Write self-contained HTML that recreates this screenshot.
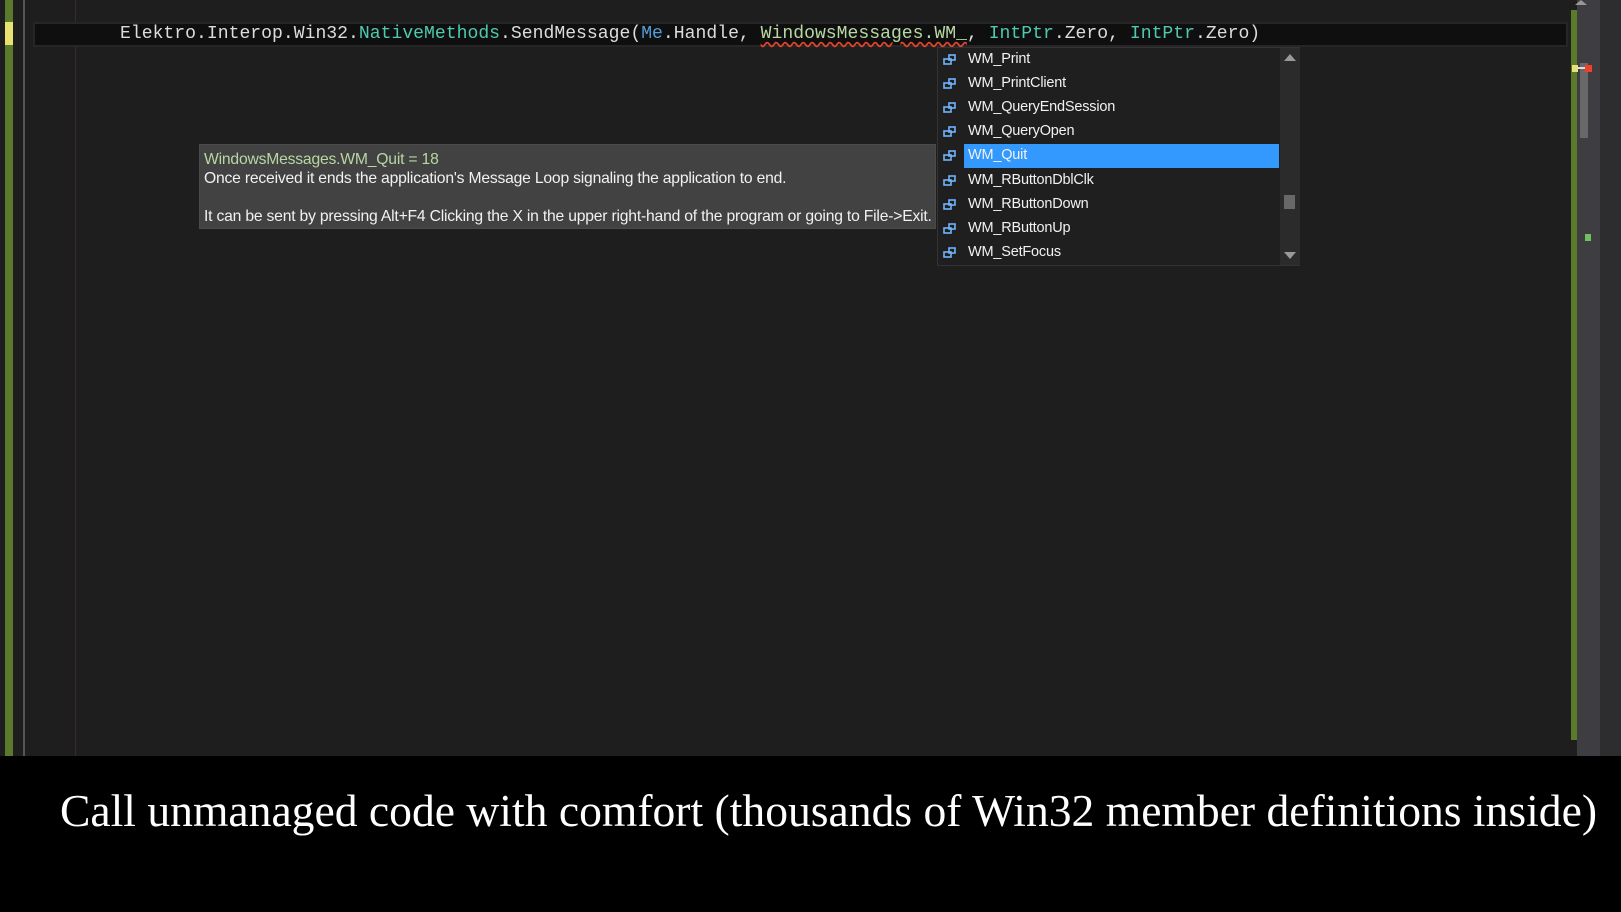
<!DOCTYPE html>
<html><head><meta charset="utf-8"><style>
*{margin:0;padding:0;box-sizing:border-box}
body{width:1621px;height:912px;background:#000;position:relative;overflow:hidden;font-family:"Liberation Sans",sans-serif}
.ed{position:absolute;left:0;top:0;width:1621px;height:756px;background:#1e1e1e}
.abs{position:absolute}
.code{position:absolute;left:120px;top:22px;font-family:"Liberation Mono",monospace;font-size:18.1px;color:#dcdcdc;white-space:pre;line-height:24px}
.t{color:#4ec9b0}.k{color:#569cd6}.g{color:#b8d7a3}
.tip{position:absolute;left:199px;top:144px;width:737px;height:85px;background:#424242;border:1px solid #4a4a4a;color:#f1f1f1;font-size:15.7px;padding:5px 0 0 4px;line-height:19px;letter-spacing:-0.2px;white-space:nowrap}
.list{position:absolute;left:937px;top:47px;width:363px;height:219px;background:#1f1f1f;border:1px solid #333337}
.it{position:absolute;left:28px;height:23px;line-height:23px;color:#f1f1f1;font-size:14.5px;width:316px;padding-left:3px;letter-spacing:-0.2px}
.ic{position:absolute;left:6px;width:14px;height:12px}
</style></head><body>
<div class="ed">
 <div class="abs" style="left:5px;top:0;width:8px;height:756px;background:#5b7a2c"></div>
 <div class="abs" style="left:5px;top:22px;width:8px;height:23px;background:#e8e370"></div>
 <div class="abs" style="left:23px;top:0;width:2px;height:756px;background:#555"></div>
 <div class="abs" style="left:75px;top:0;width:1px;height:756px;background:#3a2a2a"></div>
 <div class="abs" style="left:33px;top:22px;width:1535px;height:25px;background:#0f0f0f;border:2px solid #262626"></div>
 <div class="code">Elektro.Interop.Win32.<span class="t">NativeMethods</span>.SendMessage(<span class="k">Me</span>.Handle, <span class="g" style="text-decoration:underline wavy #e0452b;text-underline-offset:3px">WindowsMessages.WM_</span>, <span class="t">IntPtr</span>.Zero, <span class="t">IntPtr</span>.Zero)</div>
 <div class="tip"><span style="color:#b8d7a3">WindowsMessages.WM_Quit = 18</span><br>Once received it ends the application's Message Loop signaling the application to end.<br><br>It can be sent by pressing Alt+F4 Clicking the X in the upper right-hand of the program or going to File-&gt;Exit.</div>
 <div class="list">
  <div class="abs" style="left:26px;top:96px;width:315px;height:24px;background:#3399ff"></div>
  <div class="abs" style="left:342px;top:0;width:20px;height:217px;background:#2b2b2b"></div>
  <div class="abs" style="left:346px;top:147px;width:11px;height:14px;background:#686868"></div>
  <div class="abs" style="left:346px;top:6px;border:6px solid transparent;border-bottom:7px solid #999;border-top:0"></div>
  <div class="abs" style="left:346px;top:204px;border:6px solid transparent;border-top:7px solid #999;border-bottom:0"></div>
 </div>
 <div class="abs" style="left:1571px;top:10px;width:6px;height:730px;background:#5b7a2c"></div>
 <div class="abs" style="left:1577px;top:0;width:23px;height:756px;background:#3e3e42"></div>
 <div class="abs" style="left:1600px;top:0;width:21px;height:756px;background:#2d2d30"></div>
 <div class="abs" style="left:1580px;top:63px;width:8px;height:75px;background:#686868"></div>
 <div class="abs" style="left:1572px;top:65px;width:6px;height:7px;background:#e8e370"></div>
 <div class="abs" style="left:1577px;top:67px;width:10px;height:2px;background:#ddd"></div>
 <div class="abs" style="left:1585px;top:65px;width:7px;height:7px;background:#f0402a"></div>
 <div class="abs" style="left:1585px;top:234px;width:6px;height:7px;background:#6fc160"></div>
 <div class="abs" style="left:1575px;top:0;border:6px solid transparent;border-bottom:5px solid #999;border-top:0"></div>
</div>
<div class="abs" style="left:0;top:784px;width:1621px;text-align:center;font-family:'Liberation Serif',serif;font-size:45.6px;color:#fff;padding-left:36px;white-space:nowrap">Call unmanaged code with comfort (thousands of Win32 member definitions inside)</div>
<div class="abs" style="left:937px;top:47px;width:363px;height:219px">
 <script>
 var n=["WM_Print","WM_PrintClient","WM_QueryEndSession","WM_QueryOpen","WM_Quit","WM_RButtonDblClk","WM_RButtonDown","WM_RButtonUp","WM_SetFocus"];
 var h="";for(var i=0;i<n.length;i++){var y=1+i*24.1;
 h+='<svg class="ic" style="top:'+(y+6)+'px" viewBox="0 0 14 12"><rect x="1" y="5" width="7" height="5" fill="none" stroke="#6fb4ff" stroke-width="1.6"/><rect x="6" y="1" width="6" height="5" fill="none" stroke="#6fb4ff" stroke-width="1.6"/></svg>';
 h+='<div class="it" style="top:'+y+'px">'+n[i]+'</div>';}
 document.write(h);
 </script>
</div>
</body></html>
